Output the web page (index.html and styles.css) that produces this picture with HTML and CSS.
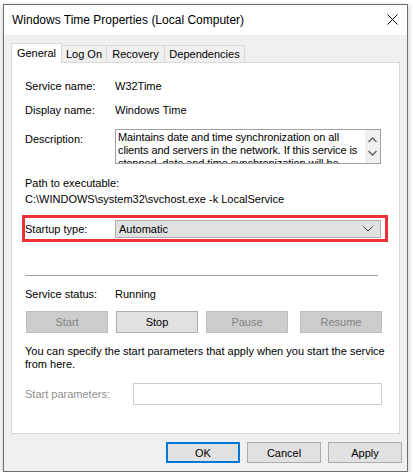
FILE: index.html
```html
<!DOCTYPE html>
<html lang="en">

<head>
    <meta charset="UTF-8">
    <meta name="viewport" content="width=device-width, initial-scale=1.0">
    <title>Windows Time Properties</title>
    <link rel="stylesheet" href="styles.css">
</head>

<body>
    <div class="window">
        <div class="titlebar">
            <span class="title">Windows Time Properties (Local Computer)</span>
            <svg class="close" width="11" height="11" viewBox="0 0 11 11">
                <path d="M0.5 0.5 L10.5 10.5 M10.5 0.5 L0.5 10.5" stroke="#000" stroke-width="1" fill="none" />
            </svg>
        </div>
        <div class="client">
            <div class="tabs">
                <div class="tab active">General</div>
                <div class="tab logon">Log On</div>
                <div class="tab recovery">Recovery</div>
                <div class="tab deps">Dependencies</div>
            </div>
            <div class="panel">
                <div class="field first">
                    <span class="label">Service name:</span>
                    <span>W32Time</span>
                </div>
                <div class="field">
                    <span class="label">Display name:</span>
                    <span>Windows Time</span>
                </div>
                <div class="field desc-row">
                    <span class="label">Description:</span>
                    <div class="desc-box">
                        <div class="desc-text">Maintains date and time synchronization on all clients and servers in the network. If this service is stopped, date and time synchronization will be unavailable.</div>
                        <div class="scroll">
                            <svg width="9" height="6" viewBox="0 0 9 6"><path d="M0.5 5 L4.5 1 L8.5 5" stroke="#606060" stroke-width="1.3" fill="none" /></svg>
                            <svg width="9" height="6" viewBox="0 0 9 6"><path d="M0.5 1 L4.5 5 L8.5 1" stroke="#606060" stroke-width="1.3" fill="none" /></svg>
                        </div>
                    </div>
                </div>
                <div class="path">
                    <div>Path to executable:</div>
                    <div>C:\WINDOWS\system32\svchost.exe -k LocalService</div>
                </div>
                <div class="startup">
                    <span class="label">Startup type:</span>
                    <div class="combo">
                        <span>Automatic</span>
                        <svg width="10" height="6" viewBox="0 0 10 6"><path d="M0.5 0.5 L5 5 L9.5 0.5" stroke="#333" stroke-width="1" fill="none" /></svg>
                    </div>
                </div>
                <div class="separator"></div>
                <div class="field">
                    <span class="label">Service status:</span>
                    <span>Running</span>
                </div>
                <div class="actions">
                    <button class="btn" disabled>Start</button>
                    <button class="btn">Stop</button>
                    <button class="btn" disabled>Pause</button>
                    <button class="btn" disabled>Resume</button>
                </div>
                <p class="hint">You can specify the start parameters that apply when you start the service from here.</p>
                <div class="params">
                    <span class="label muted">Start parameters:</span>
                    <div class="param-box"></div>
                </div>
            </div>
            <div class="footer">
                <button class="btn default">OK</button>
                <button class="btn">Cancel</button>
                <button class="btn">Apply</button>
            </div>
        </div>
    </div>
</body>

</html>
```

FILE: styles.css
```css
body {
    margin: 0;
    background-color: #fff;
    font-family: "Liberation Sans", Arial, sans-serif;
    font-size: 11px;
    color: #000;
}

.window {
    margin: 4px 0 0 3px;
    width: 403px;
    border: 1px solid #6e6e6e;
    box-shadow: 0 2px 6px rgba(0, 0, 0, 0.25);
}

.titlebar {
    height: 30px;
    background-color: #fff;
    display: flex;
    align-items: center;
    justify-content: space-between;
    padding: 0 9px 0 8px;
}

.title {
    font-size: 12px;
}

.close {
    display: block;
    margin-top: -1px;
}

.client {
    background-color: #f0f0f0;
    padding: 8px 0 8px 7px;
}

/* tab strip */
.tabs {
    display: flex;
    align-items: flex-end;
    height: 19px;
}

.tab {
    height: 17px;
    line-height: 16px;
    text-align: center;
    border: 1px solid #d9d9d9;
    border-bottom: none;
    border-left: none;
    box-sizing: border-box;
}

.tab.active {
    width: 51px;
    height: 20px;
    margin-bottom: -1px;
    background-color: #fff;
    border-left: 1px solid #d9d9d9;
    line-height: 18px;
    position: relative;
}

.tab.logon {
    width: 45px;
}

.tab.recovery {
    width: 58px;
}

.tab.deps {
    width: 80px;
}

.panel {
    width: 389px;
    height: 372px;
    box-sizing: border-box;
    background-color: #fff;
    border: 1px solid #d9d9d9;
    padding: 15px 0 0 13px;
}

.field {
    display: flex;
    align-items: center;
    height: 16px;
    margin-top: 8px;
}

.field.first {
    margin-top: 0;
}

.label {
    width: 90px;
    flex-shrink: 0;
}

.muted {
    color: #8f8f8f;
    width: 108px;
}

.desc-row {
    height: auto;
    align-items: flex-start;
    margin-top: 11px;
}

.desc-row .label {
    padding-top: 4px;
}

.desc-box {
    width: 266px;
    height: 35px;
    box-sizing: border-box;
    border: 1px solid #a0a0a0;
    display: flex;
    overflow: hidden;
}

.desc-text {
    flex: 1;
    padding: 1px 0 0 2px;
    line-height: 13px;
    letter-spacing: -0.1px;
}

.scroll {
    width: 15px;
    flex-shrink: 0;
    background-color: #f0f0f0;
    display: flex;
    flex-direction: column;
    align-items: center;
    justify-content: space-around;
    padding: 3px 0;
}

.scroll svg {
    display: block;
}

.path {
    margin-top: 11px;
    line-height: 16px;
}

/* highlighted startup row */
.startup {
    display: flex;
    align-items: center;
    margin: 8px 0 0 -3px;
    width: 366px;
    height: 27px;
    box-sizing: border-box;
    border: 3px solid #ec3237;
}

.combo {
    width: 266px;
    height: 18px;
    box-sizing: border-box;
    background-color: #e1e1e1;
    border: 1px solid #adadad;
    display: flex;
    align-items: center;
    justify-content: space-between;
    padding: 0 7px 0 3px;
}

.combo svg {
    display: block;
}

.separator {
    width: 353px;
    height: 1px;
    background-color: #a0a0a0;
    margin-top: 33px;
}

.separator + .field {
    margin-top: 10px;
}

.btn {
    font-family: inherit;
    font-size: 11px;
    color: #000;
    background-color: #e1e1e1;
    border: 1px solid #adadad;
    padding: 0;
    margin: 0;
    height: 22px;
    box-sizing: border-box;
}

.btn:disabled {
    background-color: #cccccc;
    border-color: #bfbfbf;
    color: #838383;
}

.actions {
    display: flex;
    gap: 8px;
    margin: 9px 0 0 1px;
}

.actions .btn {
    width: 82px;
}

.actions .btn:last-child {
    margin-left: 4px;
}

.hint {
    margin: 12px 0 0;
    line-height: 13px;
    width: 360px;
}

.params {
    display: flex;
    align-items: center;
    margin-top: 12px;
}

.param-box {
    width: 249px;
    height: 22px;
    box-sizing: border-box;
    border: 1px solid #cccccc;
}

.footer {
    display: flex;
    justify-content: flex-end;
    gap: 7px;
    padding: 8px 5px 0 0;
}

.footer .btn {
    width: 74px;
    height: 21px;
}

.footer .default {
    border: 2px solid #0078d7;
}
```
